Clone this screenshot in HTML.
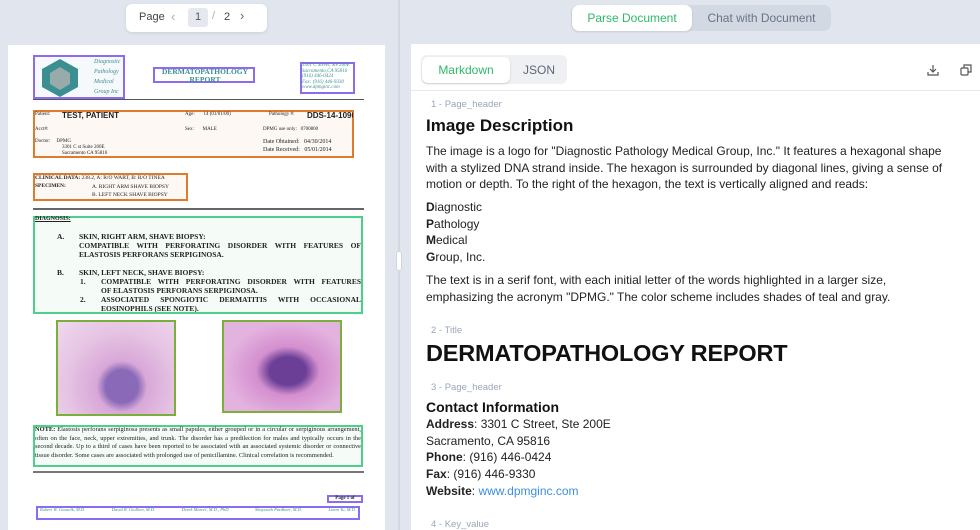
<!DOCTYPE html>
<html><head><meta charset="utf-8"><style>
*{margin:0;padding:0;box-sizing:border-box}
body{width:980px;height:530px;overflow:hidden;background:#e1e6ee;font-family:"Liberation Sans",sans-serif;position:relative}
.a{position:absolute}
.doc{font-family:"Liberation Serif",serif;color:#222}
.box{position:absolute;border:2px solid}
.pu{border-color:#8a6cf0}.or{border-color:#e07a2c;background:rgba(224,122,44,.05)}.gr{border-color:#4fd08a;background:rgba(79,208,138,.06)}.og{border-color:#7ab03a}
.r{position:absolute;left:426px;font-size:12px;color:#222;white-space:nowrap}
.lbl{position:absolute;left:431px;font-size:9.5px;color:#9aa6b8}
b{font-weight:bold}
.dl{position:absolute;font-size:7.5px;font-weight:bold;white-space:nowrap;overflow:hidden}
.j{text-align:justify;text-align-last:justify}
</style></head><body>
<div class="a" style="left:126px;top:4px;width:141px;height:28px;background:#fff;border-radius:6px;box-shadow:0 1px 3px rgba(0,0,0,.1)"></div>
<div class="a" style="left:139px;top:11px;font-size:11px;color:#444">Page</div>
<div class="a" style="left:171px;top:9px;font-size:13px;color:#aaa">‹</div>
<div class="a" style="left:188px;top:8px;width:20px;height:19px;background:#e5e8ee;border-radius:3px;font-size:11px;color:#555;text-align:center;line-height:19px">1</div>
<div class="a" style="left:212px;top:10px;font-size:11px;color:#aaa">/</div>
<div class="a" style="left:224px;top:11px;font-size:11px;color:#444">2</div>
<div class="a" style="left:240px;top:8px;font-size:13px;color:#666">›</div>
<div class="a" style="left:8px;top:45px;width:377px;height:485px;background:#fff"></div>
<div class="doc">
<div class="box pu" style="left:33px;top:55px;width:92px;height:44px;background:#f6f9fb"></div>
<svg class="a" style="left:38px;top:57px" width="45" height="40"><polygon points="22,2 40,12 40,30 22,40 4,30 4,12" fill="#3b8f92"/><polygon points="22,10 32,16 32,27 22,33 12,27 12,16" fill="#9aa"/></svg>
<div class="a" style="left:94px;top:57px;font-size:6px;color:#3b8f92;font-style:italic;line-height:10px">Diagnostic<br>Pathology<br>Medical<br>Group Inc</div>
<div class="box pu" style="left:153px;top:67px;width:102px;height:16px"></div>
<div class="a" style="left:155px;top:68px;font-size:7.5px;color:#3b8f92;font-weight:bold;line-height:8px;width:100px;text-align:center">DERMATOPATHOLOGY REPORT</div>
<div class="box pu" style="left:300px;top:62px;width:55px;height:32px"></div>
<div class="a" style="left:302px;top:63px;font-size:5px;color:#3b8f92;line-height:5.5px;font-style:italic;white-space:nowrap">3301 C Street, Ste 200E<br>Sacramento,CA 95816<br>(916) 446-0424<br>Fax: (916) 446-9330<br>www.dpmginc.com</div>
<div class="a" style="left:33px;top:99px;width:331px;height:1px;background:#555"></div>
<div class="box or" style="left:33px;top:110px;width:321px;height:48px"></div>
<div class="a" style="left:35px;top:112px;font-size:5px">Patient:</div>
<div class="a" style="left:62px;top:111px;font-size:8px;font-family:'Liberation Sans';font-weight:bold">TEST, PATIENT</div>
<div class="a" style="left:185px;top:112px;font-size:5px">Age: &nbsp; &nbsp; &nbsp; 14 (01/01/00)</div>
<div class="a" style="left:269px;top:112px;font-size:5px">Pathology #:</div>
<div class="a" style="left:307px;top:111px;font-size:8px;font-family:'Liberation Sans';font-weight:bold;width:46px;overflow:hidden;white-space:nowrap">DDS-14-1096</div>
<div class="a" style="left:35px;top:127px;font-size:5px">Acct#: </div>
<div class="a" style="left:185px;top:127px;font-size:5px">Sex: &nbsp; &nbsp; &nbsp; MALE</div>
<div class="a" style="left:263px;top:127px;font-size:5px">DPMG use only: &nbsp; 0700800</div>
<div class="a" style="left:35px;top:139px;font-size:5px;line-height:6px;white-space:nowrap">Doctor: &nbsp; &nbsp; DPMG</div>
<div class="a" style="left:62px;top:145px;font-size:5px;line-height:6px;white-space:nowrap">3301 C st Suite 200E<br>Sacramento CA 95816</div>
<div class="a" style="left:263px;top:138px;font-size:6px;line-height:8px;white-space:nowrap">Date Obtained: &nbsp; 04/30/2014<br>Date Received: &nbsp; 05/01/2014</div>
<div class="box or" style="left:33px;top:173px;width:155px;height:28px"></div>
<div class="a" style="left:35px;top:174px;font-size:5.5px;line-height:9px;white-space:nowrap"><b>CLINICAL DATA:</b> 238.2, A: R/O WART, B: R/O TINEA</div>
<div class="a" style="left:35px;top:183px;font-size:5.5px;white-space:nowrap"><b>SPECIMEN:</b></div>
<div class="a" style="left:92px;top:183px;font-size:5.5px;line-height:8px;white-space:nowrap">A. RIGHT ARM SHAVE BIOPSY<br>B. LEFT NECK SHAVE BIOPSY</div>
<div class="a" style="left:33px;top:208px;width:331px;height:2px;background:#666"></div>
<div class="box gr" style="left:33px;top:216px;width:330px;height:98px"></div>
<div class="a" style="left:35px;top:216px;font-size:6px;font-weight:bold;text-decoration:underline">DIAGNOSIS:</div>
<div class="dl" style="left:57px;top:232px">A.</div>
<div class="dl" style="left:79px;top:232px">SKIN, RIGHT ARM, SHAVE BIOPSY:</div>
<div class="dl j" style="left:79px;top:241px;width:282px">COMPATIBLE WITH PERFORATING DISORDER WITH FEATURES OF</div>
<div class="dl" style="left:79px;top:250px">ELASTOSIS PERFORANS SERPIGINOSA.</div>
<div class="dl" style="left:57px;top:268px">B.</div>
<div class="dl" style="left:79px;top:268px">SKIN, LEFT NECK, SHAVE BIOPSY:</div>
<div class="dl" style="left:80px;top:277px">1.</div>
<div class="dl j" style="left:101px;top:277px;width:260px">COMPATIBLE WITH PERFORATING DISORDER WITH FEATURES</div>
<div class="dl" style="left:101px;top:286px">OF ELASTOSIS PERFORANS SERPIGINOSA.</div>
<div class="dl" style="left:80px;top:295px">2.</div>
<div class="dl j" style="left:101px;top:295px;width:260px">ASSOCIATED SPONGIOTIC DERMATITIS WITH OCCASIONAL</div>
<div class="dl" style="left:101px;top:304px;height:8px">EOSINOPHILS (SEE NOTE).</div>
<div class="box og" style="left:56px;top:320px;width:120px;height:96px;background:radial-gradient(ellipse at 55% 70%,#8a6ab8 0 18%,#d8a8d8 28%,#e6c3e3 60%,#efd9ee)"></div>
<div class="box og" style="left:222px;top:320px;width:120px;height:93px;background:radial-gradient(ellipse at 55% 55%,#6a3f95 0 20%,#d48fcf 35%,#e3b3df 70%)"></div>
<div class="box gr" style="left:33px;top:425px;width:330px;height:42px"></div>
<div class="a" style="left:35px;top:426px;font-size:6.4px;line-height:8.5px;width:326px;text-align:justify"><b>NOTE:</b> Elastosis perforans serpiginosa presents as small papules, either grouped or in a circular or serpiginous arrangement, often on the face, neck, upper extremities, and trunk. The disorder has a predilection for males and typically occurs in the second decade. Up to a third of cases have been reported to be associated with an associated systemic disorder or connective tissue disorder. Some cases are associated with prolonged use of penicillamine. Clinical correlation is recommended.</div>
<div class="a" style="left:33px;top:471px;width:331px;height:2px;background:#777"></div>
<div class="box pu" style="left:327px;top:495px;width:36px;height:8px;font-size:5px;font-weight:bold;line-height:4px;text-align:center">Page 1 of</div>
<div class="box pu" style="left:36px;top:506px;width:324px;height:14px"></div>
<div class="a" style="left:40px;top:507px;width:316px;display:flex;justify-content:space-between;font-size:4.5px;color:#3b8f92;font-style:italic;white-space:nowrap"><span>Robert W. Gnuselk, M.D.</span><span>David R. Giullien, M.D.</span><span>Derek Marcel, M.D., PhD</span><span>Shayesteh Pardhari, M.D.</span><span>Limin Yu, M.D.</span></div>
</div>
<div class="a" style="left:398px;top:0;width:2px;height:530px;background:#d2d8e1"></div>
<div class="a" style="left:396px;top:251px;width:6px;height:20px;background:#fff;border:1px solid #d0d5dd;border-radius:3px"></div>
<div class="a" style="left:571px;top:5px;width:260px;height:26px;background:#d3d9e3;border-radius:7px"></div>
<div class="a" style="left:572px;top:5px;width:120px;height:26px;background:#fff;border-radius:7px;box-shadow:0 1px 2px rgba(0,0,0,.12);color:#2fb86a;font-size:12px;text-align:center;line-height:26px">Parse Document</div>
<div class="a" style="left:692px;top:5px;width:139px;height:26px;color:#687384;font-size:12px;text-align:center;line-height:26px">Chat with Document</div>
<div class="a" style="left:411px;top:44px;width:569px;height:486px;background:#fff"></div>
<div class="a" style="left:421px;top:55px;width:146px;height:29px;background:#eef0f4;border-radius:6px"></div>
<div class="a" style="left:422px;top:57px;width:88px;height:26px;background:#fff;border-radius:6px;box-shadow:0 1px 2px rgba(0,0,0,.15);color:#2fb86a;font-size:12px;text-align:center;line-height:26px">Markdown</div>
<div class="a" style="left:512px;top:57px;width:54px;height:26px;color:#5d6775;font-size:12px;text-align:center;line-height:26px">JSON</div>
<svg class="a" style="left:927px;top:64px" width="12" height="12" fill="none" stroke="#555" stroke-width="1.2"><path d="M6 1v7M3 5l3 3 3-3M1 8v3h10V8"/></svg>
<svg class="a" style="left:960px;top:64px" width="12" height="12" fill="none" stroke="#555" stroke-width="1.2"><rect x="1" y="4" width="7" height="7" rx="1"/><path d="M4 4V1h7v7H8"/></svg>
<div class="a" style="left:411px;top:90px;width:569px;height:1px;background:#e6e9f0"></div>
<div class="lbl" style="top:99px">1 - Page_header</div>
<div class="r" style="top:116px;font-size:17px;font-weight:bold;color:#111">Image Description</div>
<div class="r" style="top:143px;line-height:16.6px">The image is a logo for "Diagnostic Pathology Medical Group, Inc." It features a hexagonal shape<br>with a stylized DNA strand inside. The hexagon is surrounded by diagonal lines, giving a sense of<br>motion or depth. To the right of the hexagon, the text is vertically aligned and reads:</div>
<div class="r" style="top:199px;line-height:16.6px"><b>D</b>iagnostic<br><b>P</b>athology<br><b>M</b>edical<br><b>G</b>roup, Inc.</div>
<div class="r" style="top:272px;line-height:16.6px">The text is in a serif font, with each initial letter of the words highlighted in a larger size,<br>emphasizing the acronym "DPMG." The color scheme includes shades of teal and gray.</div>
<div class="lbl" style="top:325px">2 - Title</div>
<div class="r" style="top:340px;font-size:23.5px;font-weight:bold;color:#111;letter-spacing:-.2px">DERMATOPATHOLOGY REPORT</div>
<div class="lbl" style="top:382px">3 - Page_header</div>
<div class="r" style="top:399px;font-size:14px;font-weight:bold;color:#111">Contact Information</div>
<div class="r" style="top:416px;line-height:16.7px"><b>Address</b>: 3301 C Street, Ste 200E<br>Sacramento, CA 95816<br><b>Phone</b>: (916) 446-0424<br><b>Fax</b>: (916) 446-9330<br><b>Website</b>: <span style="color:#3b8fe0">www.dpmginc.com</span></div>
<div class="lbl" style="top:519px">4 - Key_value</div>
</body></html>
